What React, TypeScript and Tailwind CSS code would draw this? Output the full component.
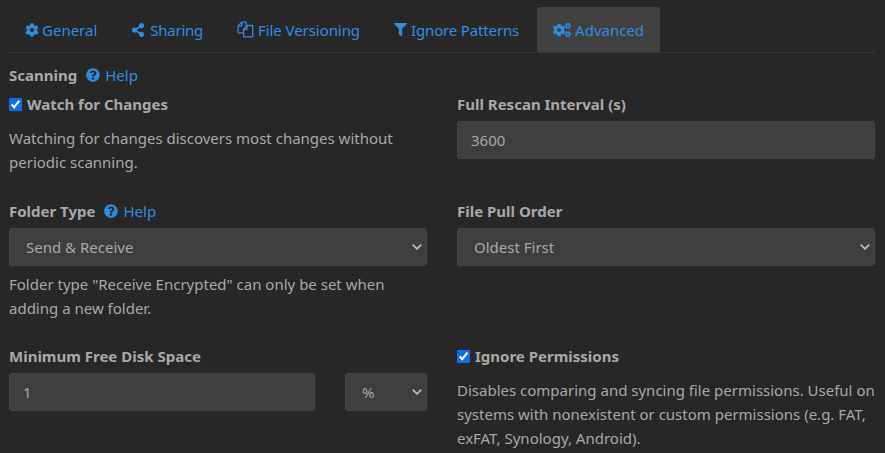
import React from "react";
import { FaCog, FaShareAlt, FaFilter, FaCogs, FaQuestionCircle } from "react-icons/fa";

const font = "[font-family:'Noto_Sans','Open_Sans',sans-serif]";

function FilesIcon() {
  return (
    <svg viewBox="0 0 18 18" className="mr-[4px] h-[17px] w-[17px]" fill="none" stroke="currentColor" strokeWidth="1.4" strokeLinejoin="round">
      <path d="M7.5 12.5H1.2V5.2L5 1.2h4.6v3.6" />
      <path d="M5 1.2v4H1.2" />
      <path d="M7 16.8V8.8L10.6 4.8H16.6V16.8Z" />
      <path d="M10.6 4.8v4H7" />
    </svg>
  );
}

function Tab({ icon, label, active, className }: { icon: React.ReactNode; label: string; active?: boolean; className?: string }) {
  return (
    <div className={`mr-[2px] flex h-[45px] items-center rounded-t-[3px] px-[16px] text-[#2f8de0] ${active ? "bg-[#414141]" : ""} ${className ?? ""}`}>
      {icon}
      <span>{label}</span>
    </div>
  );
}

function Help() {
  return (
    <span className="ml-[9px] inline-flex items-center gap-[5px] align-top font-normal text-[#2f8de0]">
      <FaQuestionCircle className="h-[14px] w-[14px]" />
      Help
    </span>
  );
}

function Check({ label }: { label: string }) {
  return (
    <label className="flex h-[24px] items-center gap-[5px] font-bold text-[#a8a8a8]">
      <input type="checkbox" defaultChecked readOnly className="m-0 h-[13px] w-[13px] accent-[#0b6fe8]" />
      {label}
    </label>
  );
}

const box = "h-[38px] w-full rounded-[3px] border border-[#444444] bg-[#3e3e3e] text-[15px] text-[#a8a8a8] outline-none";
const input = `${box} px-[13px]`;

function Select({ value, className }: { value: string; className?: string }) {
  return (
    <div className={`relative ${className ?? "w-full"}`}>
      <select className={`${box} block appearance-none pl-[16px] pr-[24px]`} defaultValue={value}>
        <option>{value}</option>
      </select>
      <svg viewBox="0 0 10 6" className="pointer-events-none absolute right-[5px] top-[16px] h-[6px] w-[10px]" fill="none" stroke="#bdbdbd" strokeWidth="1.8">
        <path d="M0.7 0.7 5 4.8 9.3 0.7" />
      </svg>
    </div>
  );
}

export default function App() {
  return (
    <div className={`h-[453px] w-[885px] overflow-hidden bg-[#272727] pl-[9px] pr-[10px] pt-[7px] text-[15px] leading-[24px] text-[#a8a8a8] ${font}`}>
      <div className="flex border-b border-[#373737]">
        <Tab icon={<FaCog className="mr-[3px] h-[14px] w-[14px]" />} label="General" />
        <Tab icon={<FaShareAlt className="mr-[5px] h-[14px] w-[14px]" />} label="Sharing" className="tracking-[-0.25px]" />
        <Tab icon={<FilesIcon />} label="File Versioning" className="tracking-[-0.07px]" />
        <Tab icon={<FaFilter className="mr-[4px] h-[13px] w-[13px]" />} label="Ignore Patterns" className="tracking-[-0.15px]" />
        <Tab icon={<FaCogs className="mr-[4px] h-[18px] w-[18px]" />} label="Advanced" active />
      </div>

      <div className="mt-[10px] grid grid-cols-[418px_418px] gap-x-[30px]">
        <div>
          <div className="font-bold">Scanning<Help /></div>
          <div className="mt-[5px]"><Check label="Watch for Changes" /></div>
          <p className="m-0 mt-[10px]">Watching for changes discovers most changes without periodic scanning.</p>
        </div>
        <div className="pt-[29px]">
          <div className="font-bold">Full Rescan Interval (s)</div>
          <input className={`${input} mt-[5px] block`} defaultValue="3600" />
        </div>

        <div className="mt-[25px]">
          <div className="font-bold">Folder Type<Help /></div>
          <div className="mt-[5px]"><Select value="Send & Receive" /></div>
          <p className="m-0 mt-[6px]">Folder type "Receive Encrypted" can only be set when adding a new folder.</p>
        </div>
        <div className="mt-[25px]">
          <div className="font-bold">File Pull Order</div>
          <div className="mt-[5px]"><Select value="Oldest First" /></div>
        </div>

        <div className="mt-[24px]">
          <div className="font-bold">Minimum Free Disk Space</div>
          <div className="mt-[5px] flex justify-between">
            <input className={`${input} !w-[306px]`} defaultValue="1" />
            <Select value="%" className="w-[82px]" />
          </div>
        </div>
        <div className="mt-[24px]">
          <Check label="Ignore Permissions" />
          <p className="m-0 mt-[10px]">Disables comparing and syncing file permissions. Useful on systems with nonexistent or custom permissions (e.g. FAT, exFAT, Synology, Android).</p>
        </div>
      </div>
    </div>
  );
}
